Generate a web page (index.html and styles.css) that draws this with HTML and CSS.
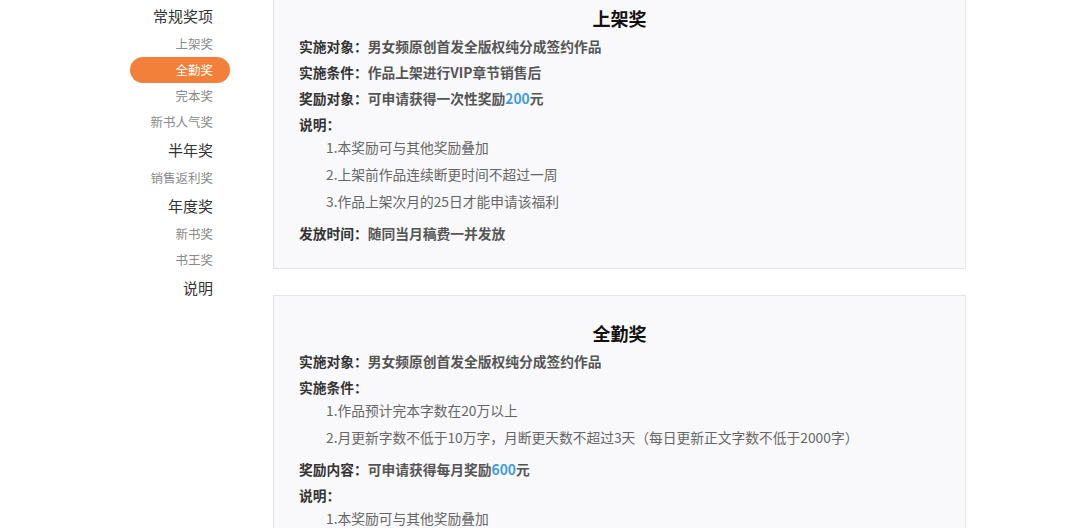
FILE: index.html
```html
<!DOCTYPE html>
<html lang="zh-CN">
<head>
    <meta charset="UTF-8">
    <meta name="viewport" content="width=device-width, initial-scale=1.0">
    <title>作者福利</title>
    <link rel="stylesheet" href="styles.css">
</head>
<body>
    <div class="page">
        <div class="side-nav">
            <div class="nav-group">常规奖项</div>
            <div class="nav-item">上架奖</div>
            <div class="nav-item active">全勤奖</div>
            <div class="nav-item">完本奖</div>
            <div class="nav-item">新书人气奖</div>
            <div class="nav-group">半年奖</div>
            <div class="nav-item">销售返利奖</div>
            <div class="nav-group">年度奖</div>
            <div class="nav-item">新书奖</div>
            <div class="nav-item">书王奖</div>
            <div class="nav-group">说明</div>
        </div>

        <div class="content">
            <div class="card">
                <div class="card-title">上架奖</div>
                <p class="row"><span class="label">实施对象：</span>男女频原创首发全版权纯分成签约作品</p>
                <p class="row"><span class="label">实施条件：</span>作品上架进行VIP章节销售后</p>
                <p class="row"><span class="label">奖励对象：</span>可申请获得一次性奖励<span class="money">200</span>元</p>
                <p class="row"><span class="label">说明：</span></p>
                <ul class="notes">
                    <li>1.本奖励可与其他奖励叠加</li>
                    <li>2.上架前作品连续断更时间不超过一周</li>
                    <li>3.作品上架次月的25日才能申请该福利</li>
                </ul>
                <p class="row"><span class="label">发放时间：</span>随同当月稿费一并发放</p>
            </div>

            <div class="card">
                <div class="card-title">全勤奖</div>
                <p class="row"><span class="label">实施对象：</span>男女频原创首发全版权纯分成签约作品</p>
                <p class="row"><span class="label">实施条件：</span></p>
                <ul class="notes">
                    <li>1.作品预计完本字数在20万以上</li>
                    <li>2.月更新字数不低于10万字，月断更天数不超过3天（每日更新正文字数不低于2000字）</li>
                </ul>
                <p class="row"><span class="label">奖励内容：</span>可申请获得每月奖励<span class="money">600</span>元</p>
                <p class="row"><span class="label">说明：</span></p>
                <ul class="notes">
                    <li>1.本奖励可与其他奖励叠加</li>
                </ul>
            </div>
        </div>
    </div>
</body>
</html>
```

FILE: styles.css
```css
body {
    margin: 0;
    overflow: hidden;
    background: #fff;
    font-family: "Noto Sans CJK SC", "Noto Sans", sans-serif;
    color: #333;
}

.page {
    display: flex;
    align-items: flex-start;
    gap: 43px;
    padding-left: 130px;
}

/* left menu */
.side-nav {
    width: 100px;
    padding-top: 1px;
    flex-shrink: 0;
}
.nav-group,
.nav-item {
    text-align: right;
    padding-right: 17px;
}
.nav-group {
    height: 30px;
    line-height: 30px;
    font-size: 15px;
    color: #333;
}
.nav-item {
    height: 26px;
    line-height: 26px;
    font-size: 12.5px;
    color: #8a8a8a;
}
.nav-item.active {
    background: #f3803a;
    color: #fff;
    border-radius: 13px;
}

/* prize cards */
.content {
    width: 693px;
    margin-top: -20px;
}
.card {
    background: #f9f9fb;
    border: 1px solid #e5e5e8;
    padding: 22px 25px 22px;
    margin-bottom: 26px;
}
.card-title {
    text-align: center;
    font-size: 18px;
    font-weight: bold;
    color: #111;
    height: 30px;
    line-height: 30px;
}
.row {
    margin: 0;
    height: 26px;
    line-height: 26px;
    font-size: 13.75px;
    font-weight: bold;
    color: #555;
}
.label {
    color: #333;
}
.money {
    color: #3d9be0;
}
.notes {
    list-style: none;
    margin: -3px 0 5px;
    padding-left: 27px;
}
.notes li {
    height: 27px;
    line-height: 27px;
    font-size: 13.75px;
    color: #666;
}
```
